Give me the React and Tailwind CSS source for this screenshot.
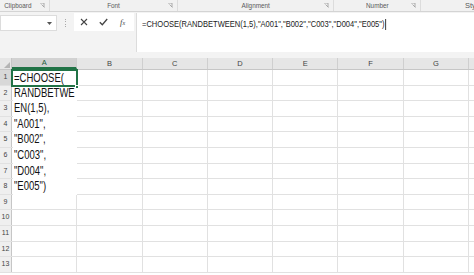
import React from "react";

const cols = ["A", "B", "C", "D", "E", "F", "G"];
const rows = [1, 2, 3, 4, 5, 6, 7, 8, 9, 10, 11, 12, 13];
const cellLines = ["=CHOOSE(", "RANDBETWE", "EN(1,5),", "\"A001\",", "\"B002\",", "\"C003\",", "\"D004\",", "\"E005\")"];

function Corner() {
  return (
    <svg width="5" height="5" viewBox="0 0 5 5" className="block">
      <path d="M0 0h4v4" fill="none" stroke="#9a9a9a" strokeWidth="0.8" />
      <path d="M1.5 1.5l3 3" stroke="#9a9a9a" strokeWidth="0.8" />
    </svg>
  );
}

function Group({ label, w }) {
  return (
    <div className="relative h-full flex items-center justify-center shrink-0 border-r border-[#dcdcdc]" style={{ width: w }}>
      <span className="text-[7.5px] text-[#5a5a5a] scale-x-[0.85]">{label}</span>
      <span className="absolute right-[4px] top-[3px]"><Corner /></span>
    </div>
  );
}

export default function App() {
  return (
    <div className="w-[474px] h-[275px] overflow-hidden bg-white relative" style={{ fontFamily: "'Liberation Sans', Arial, sans-serif" }}>
      {/* ribbon group labels */}
      <div className="h-[12px] bg-[#f1f1f1] border-b border-[#d4d4d4] flex items-stretch overflow-hidden">
        <div className="relative w-[50px] shrink-0 border-r border-[#dcdcdc] flex items-center">
          <span className="text-[7.5px] text-[#5a5a5a] pl-[5px] origin-left scale-x-[0.85]">Clipboard</span>
          <span className="absolute right-[4px] top-[3px]"><Corner /></span>
        </div>
        <Group label="Font" w={128} />
        <Group label="Alignment" w={156} />
        <Group label="Number" w={87} />
        <div className="flex items-center pl-[44px]"><span className="text-[7.5px] text-[#5a5a5a] whitespace-nowrap">Sty</span></div>
      </div>

      {/* formula bar */}
      <div className="h-[46px] bg-[#f3f3f3] flex items-start pt-[1px]">
        <div className="w-[57px] h-[16px] mt-[2px] bg-white border border-[#dcdcdc] flex items-center justify-end pr-[4px] shrink-0">
          <svg width="5" height="3" viewBox="0 0 5 3"><path d="M0 0h5L2.5 3z" fill="#555" /></svg>
        </div>
        <div className="w-[17px] h-[18px] flex items-center justify-center shrink-0 mt-[1px]">
          <div className="flex flex-col gap-[1.5px]">
            <span className="w-[1px] h-[1px] bg-[#aaa]" />
            <span className="w-[1px] h-[1px] bg-[#aaa]" />
            <span className="w-[1px] h-[1px] bg-[#aaa]" />
            <span className="w-[1px] h-[1px] bg-[#aaa]" />
          </div>
        </div>
        <div className="w-[60px] h-[18px] bg-white flex items-center shrink-0">
          <svg width="8" height="8" viewBox="0 0 8 8" className="ml-[6px]"><path d="M1 1l6 6M7 1L1 7" stroke="#444" strokeWidth="1.1" /></svg>
          <svg width="9" height="8" viewBox="0 0 9 8" className="ml-[11px]"><path d="M0.8 4.2l2.5 2.5L8.2 1" fill="none" stroke="#444" strokeWidth="1.3" /></svg>
          <span className="ml-[12px] text-[8.5px] italic text-[#444]" style={{ fontFamily: "'Liberation Serif', serif" }}>f<span className="text-[6px]">x</span></span>
        </div>
        <div className="ml-[2px] flex-1 h-[39px] bg-white border-l border-[#dcdcdc] pl-[5px] pt-[4px]">
          <div className="origin-left scale-x-[0.77] whitespace-nowrap flex items-center">
            <span className="text-[9.8px] text-[#222]">=CHOOSE(RANDBETWEEN(1,5),"A001","B002","C003","D004","E005")</span>
            <span className="inline-block w-[1.3px] h-[11px] bg-black ml-[1px]" />
          </div>
        </div>
      </div>

      {/* column headers */}
      <div className="h-[12px] bg-[#e6e6e6] flex border-b border-[#c6c6c6]">
        <div className="w-[12px] shrink-0 border-r border-[#c6c6c6] flex items-end justify-end pr-[1px] pb-[1px]">
          <svg width="6" height="6" viewBox="0 0 6 6"><path d="M6 0v6H0z" fill="#b4b4b4" /></svg>
        </div>
        {cols.map((c, i) => (
          <div key={c} className={`w-[65.3px] shrink-0 flex items-center justify-center text-[7.5px] border-r border-[#cfcfcf] ${i === 0 ? "bg-[#d2d2d2] border-b-2 border-b-[#217346] text-[#1e5e3a]" : "text-[#444]"}`}>
            {c}
          </div>
        ))}
        <div className="flex-1" />
      </div>

      {/* grid */}
      <div className="relative">
        {rows.map((r) => (
          <div key={r} className="h-[15.6px] flex border-b border-[#e1e1e1]">
            <div className={`w-[12px] shrink-0 border-r border-[#c6c6c6] flex items-center justify-center text-[7px] text-[#444] ${r === 1 ? "bg-[#d8d8d8]" : "bg-[#efefef]"}`}>
              {r}
            </div>
            {cols.map((c) => (
              <div key={c} className="w-[65.3px] shrink-0 border-r border-[#e1e1e1]" />
            ))}
            <div className="flex-1" />
          </div>
        ))}

        {/* in-cell editor overlay */}
        <div className="absolute left-[13px] top-0 w-[64px] h-[125px] bg-white pl-[1px]">
          {cellLines.map((l, i) => (
            <div key={i} className="h-[15.6px] leading-[15.6px] text-[12.5px] text-[#111] whitespace-nowrap origin-left scale-x-[0.76]" style={{ paddingTop: i === 0 ? 1 : 0 }}>
              {l}
            </div>
          ))}
        </div>
        {/* selection border */}
        <div className="absolute left-[11px] top-[-1px] w-[67px] h-[18px] border-2 border-[#217346] pointer-events-none" />
        <div className="absolute left-[75px] top-[15px] w-[4px] h-[4px] bg-[#217346] border border-white" />
      </div>
    </div>
  );
}
